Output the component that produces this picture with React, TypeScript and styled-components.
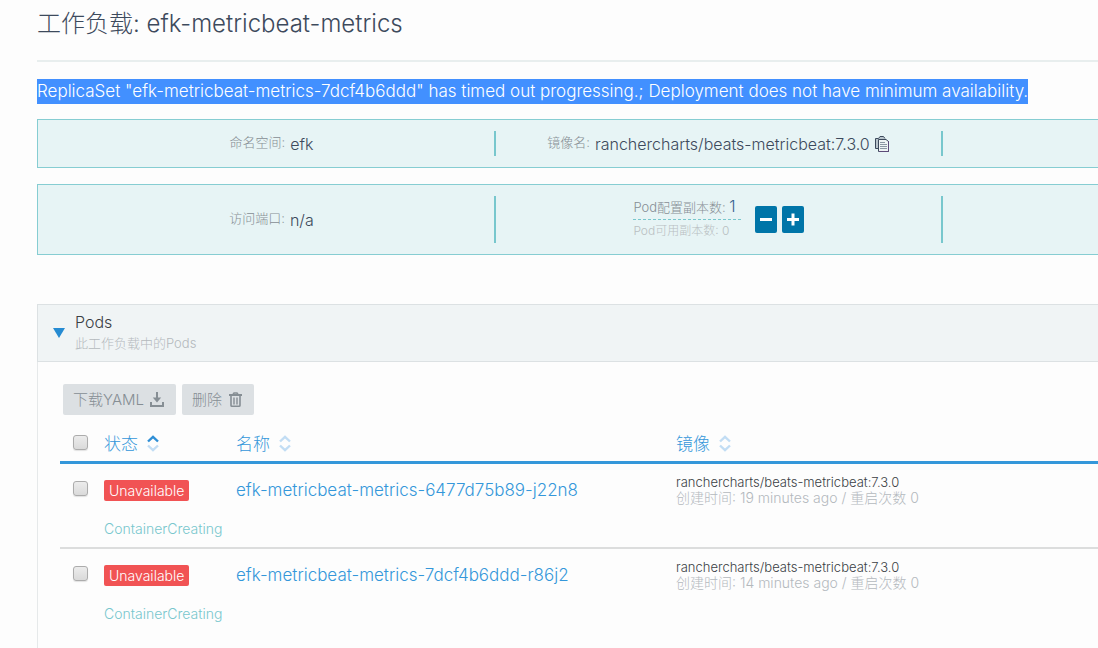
import React from 'react';
import styled, { createGlobalStyle } from 'styled-components';

const GlobalStyle = createGlobalStyle`
  * { box-sizing: border-box; }
  body {
    margin: 0;
    background: #fdfdfd;
    color: #3d4a5c;
    font-family: Inter, 'Noto Sans CJK SC', sans-serif;
    font-weight: 300;
    font-size: 16px;
    line-height: 20px;
  }
  button, input { font: inherit; }
`;

const Page = styled.main`
  display: flex;
  flex-direction: column;
  min-height: 100vh;
  padding-left: 37px;
`;

const Header = styled.header`
  padding: 8px 0 20px;
  border-bottom: 2px solid #e8eeee;
`;

const Title = styled.h1`
  margin: 0;
  font-size: 24px;
  line-height: 32px;
  font-weight: 300;
  white-space: nowrap;
`;

const Message = styled.p`
  margin: 17px 0 15px;
  font-size: 17px;
  line-height: 25px;
  font-weight: 300;
  white-space: nowrap;
`;

const Selected = styled.span`
  display: inline-block;
  background: #4290ff;
  color: #fff;
`;

const InfoBar = styled.section`
  display: grid;
  grid-template-columns: 458fr 447fr 155fr;
  margin-bottom: 16px;
  padding: 11px 0;
  border: 1px solid #86cdd2;
  border-right: 0;
  background: #e7f4f5;
`;

const InfoCell = styled.div<{ $tall?: boolean; $first?: boolean; $last?: boolean }>`
  display: flex;
  align-items: center;
  justify-content: center;
  min-height: ${(p) => (p.$tall ? 47 : 25)}px;
  padding-left: ${(p) => (p.$first ? 11 : 0)}px;
  border-right: ${(p) => (p.$last ? '0' : '2px solid #78c7cd')};
  white-space: nowrap;
`;

const Label = styled.span`
  margin-right: 5px;
  padding-bottom: 4px;
  color: #868e94;
  font-size: 13px;
`;

const CopyButton = styled.button`
  display: flex;
  margin-left: 4px;
  padding: 0;
  border: 0;
  background: none;
  color: #3d4a5c;
`;

const Scale = styled.div`
  display: flex;
  align-items: center;
  gap: 14px;
`;

const Desired = styled.div`
  padding: 0 5px 2px 0;
  border-bottom: 1px dashed #78c7cd;
  color: #868e94;
  font-size: 13px;
`;

const Count = styled.span`
  color: #34618f;
  font-size: 16px;
`;

const Available = styled.div`
  padding: 1px 0 2px;
  color: #b9bfc2;
  font-size: 12px;
`;

const Stepper = styled.div`
  display: flex;
  gap: 5px;
`;

const StepButton = styled.button`
  display: flex;
  align-items: center;
  justify-content: center;
  width: 22px;
  height: 27px;
  padding: 0;
  border: 0;
  border-radius: 2px;
  background: #0075a8;
  color: #fff;
`;

const Panel = styled.section`
  flex: 1;
  margin-top: 33px;
  border-left: 1px solid #e6e9ea;
`;

const PanelHeader = styled.div`
  display: flex;
  align-items: center;
  gap: 10px;
  height: 58px;
  margin-left: -1px;
  padding-left: 15px;
  border: 1px solid #dce1e3;
  border-right: 0;
  background: #f0f4f5;
`;

const Toggle = styled.button`
  display: flex;
  padding: 0;
  border: 0;
  background: none;
`;

const PanelTitle = styled.h2`
  margin: 0;
  color: #3b3f45;
  font-size: 16px;
  line-height: 20px;
  font-weight: 300;
`;

const PanelNote = styled.p`
  margin: 0;
  color: #b4b9bd;
  font-size: 13px;
  line-height: 22px;
`;

const PanelBody = styled.div`
  padding: 22px 0 16px 22px;
`;

const Actions = styled.div`
  display: flex;
  gap: 6px;
  padding-left: 3px;
`;

const ActionButton = styled.button`
  display: flex;
  align-items: center;
  justify-content: space-between;
  gap: 6px;
  height: 31px;
  padding: 0 12px 0 10px;
  border: 0;
  border-radius: 2px;
  background: #dce0e3;
  color: #868e94;
  font-size: 15px;
  font-weight: 300;
`;

const Table = styled.table`
  width: 100%;
  margin-top: 8px;
  border-collapse: separate;
  border-spacing: 0;
  table-layout: fixed;
`;

const Th = styled.th<{ $width?: number }>`
  width: ${(p) => (p.$width ? `${p.$width}px` : 'auto')};
  height: 41px;
  padding: 0;
  border-bottom: 3px solid #3497da;
  text-align: left;
  font-weight: 300;
`;

const SortButton = styled.button`
  display: flex;
  align-items: center;
  gap: 9px;
  padding: 3px 0 0;
  border: 0;
  background: none;
  color: #3497da;
  font-size: 17px;
  line-height: 24px;
`;

const Td = styled.td<{ $top: number; $line: boolean }>`
  padding: ${(p) => p.$top}px 0 8px;
  border-bottom: ${(p) => (p.$line ? '2px solid #dcdddd' : '0')};
  vertical-align: top;
  white-space: nowrap;
`;

const Check = styled.input`
  appearance: none;
  display: block;
  width: 15px;
  height: 15px;
  margin: 0 0 0 13px;
  border: 1px solid #acacac;
  border-radius: 3px;
  background: linear-gradient(#ececec, #dadada);
  box-shadow: 0 1px 1px #e2e2e2;
`;

const Badge = styled.span`
  display: block;
  width: max-content;
  padding: 0 5px;
  border-radius: 2px;
  background: #f15354;
  color: #fff;
  font-size: 14px;
  line-height: 21px;
  font-weight: 300;
`;

const Reason = styled.div`
  margin-top: 18px;
  color: #78c7cd;
  font-size: 14px;
`;

const PodLink = styled.a`
  color: #3497da;
  font-size: 17px;
  text-decoration: none;
`;

const Image = styled.div`
  color: #3b3f45;
  font-size: 13px;
  line-height: 16px;
`;

const Meta = styled.div`
  color: #b4b9bd;
  font-size: 14px;
  line-height: 16px;
`;

const CopyIcon = () => (
  <svg width="16" height="16" viewBox="0 0 16 16" fill="none" stroke="currentColor">
    <path d="M4.500 12.500H1.500V2.500H4.500L6 .5H9.500L11 2.500" fill="#b9c5cc" />
    <path d="M4.500 3.500H12L14.500 5.500V15.500H4.500Z" fill="#eef3f4" />
    <path d="M14.500 5V15.500H5" stroke="#5c4a78" />
    <path d="M6 6.500H11M6 8.500H13M6 10.500H13M6 12.500H13" stroke="#8b97a3" />
  </svg>
);

const DownloadIcon = () => (
  <svg width="14" height="15" viewBox="0 0 14 15" fill="none" stroke="currentColor" strokeWidth="2">
    <path d="M7 0V8" />
    <path d="M2.800 5.500H11.200L7 10.500Z" fill="currentColor" stroke="none" />
    <path d="M1 10V14H13V10" />
  </svg>
);

const TrashIcon = () => (
  <svg width="14" height="15" viewBox="-1 0 14 15" fill="none" stroke="currentColor">
    <path d="M0 3H13" strokeWidth="2" />
    <path d="M4 2.500L5 1H8L9 2.500" strokeWidth="1.500" />
    <path d="M2 4V13.500Q2 14.200 3 14.200H10Q11 14.200 11 13.500V4" strokeWidth="1.600" />
    <path d="M5 5.500V12.500M8 5.500V12.500" strokeWidth="1.400" />
  </svg>
);

const SortIcon = ({ active }: { active?: boolean }) => (
  <svg width="12" height="17" viewBox="0 0 12 17" fill="none" strokeWidth="2.400">
    <path d="M1 6.500L6 1.800L11 6.500" stroke={active ? '#2f8fd6' : '#c2ddf4'} />
    <path d="M1 10.500L6 15.200L11 10.500" stroke="#c2ddf4" />
  </svg>
);

const pods = [
  { name: 'efk-metricbeat-metrics-6477d75b89-j22n8', age: '19 minutes ago' },
  { name: 'efk-metricbeat-metrics-7dcf4b6ddd-r86j2', age: '14 minutes ago' },
];

export default function App() {
  return (
    <>
      <GlobalStyle />
      <Page>
        <Header>
          <Title>工作负载: efk-metricbeat-metrics</Title>
        </Header>
        <Message>
          <Selected>
            ReplicaSet "efk-metricbeat-metrics-7dcf4b6ddd" has timed out progressing.; Deployment does not have minimum availability.
          </Selected>
        </Message>

        <InfoBar>
          <InfoCell $first>
            <Label>命名空间:</Label>efk
          </InfoCell>
          <InfoCell>
            <Label>镜像名:</Label>ranchercharts/beats-metricbeat:7.3.0
            <CopyButton aria-label="复制"><CopyIcon /></CopyButton>
          </InfoCell>
          <InfoCell $last />
        </InfoBar>

        <InfoBar>
          <InfoCell $tall $first>
            <Label>访问端口:</Label>n/a
          </InfoCell>
          <InfoCell $tall>
            <Scale>
              <div>
                <Desired>Pod配置副本数: <Count>1</Count></Desired>
                <Available>Pod可用副本数: 0</Available>
              </div>
              <Stepper>
                <StepButton aria-label="减少">
                  <svg width="14" height="14" viewBox="0 0 14 14" fill="currentColor"><path d="M1 5h12v3H1z" /></svg>
                </StepButton>
                <StepButton aria-label="增加">
                  <svg width="14" height="14" viewBox="0 0 14 14" fill="currentColor"><path d="M1 5h4.500V.5h3V5H13v3H8.500v4.500h-3V8H1z" /></svg>
                </StepButton>
              </Stepper>
            </Scale>
          </InfoCell>
          <InfoCell $tall $last />
        </InfoBar>

        <Panel>
          <PanelHeader>
            <Toggle aria-label="Pods" aria-expanded="true">
              <svg width="12" height="10" viewBox="0 0 12 10"><path d="M0 0H12L6 10Z" fill="#268bd2" /></svg>
            </Toggle>
            <div>
              <PanelTitle>Pods</PanelTitle>
              <PanelNote>此工作负载中的Pods</PanelNote>
            </div>
          </PanelHeader>
          <PanelBody>
            <Actions>
              <ActionButton>下载YAML<DownloadIcon /></ActionButton>
              <ActionButton>删除<TrashIcon /></ActionButton>
            </Actions>
            <Table>
              <thead>
                <tr>
                  <Th $width={44}><Check type="checkbox" aria-label="全选" /></Th>
                  <Th $width={132} aria-sort="ascending"><SortButton>状态<SortIcon active /></SortButton></Th>
                  <Th $width={440}><SortButton>名称<SortIcon /></SortButton></Th>
                  <Th><SortButton>镜像<SortIcon /></SortButton></Th>
                </tr>
              </thead>
              <tbody>
                {pods.map((pod, i) => {
                  const line = i < pods.length - 1;
                  return (
                    <tr key={pod.name}>
                      <Td $top={17} $line={line}><Check type="checkbox" aria-label={pod.name} /></Td>
                      <Td $top={16} $line={line}>
                        <Badge>Unavailable</Badge>
                        <Reason>ContainerCreating</Reason>
                      </Td>
                      <Td $top={16} $line={line}><PodLink href="#">{pod.name}</PodLink></Td>
                      <Td $top={10} $line={line}>
                        <Image>ranchercharts/beats-metricbeat:7.3.0</Image>
                        <Meta>创建时间: {pod.age} / 重启次数 0</Meta>
                      </Td>
                    </tr>
                  );
                })}
              </tbody>
            </Table>
          </PanelBody>
        </Panel>
      </Page>
    </>
  );
}
